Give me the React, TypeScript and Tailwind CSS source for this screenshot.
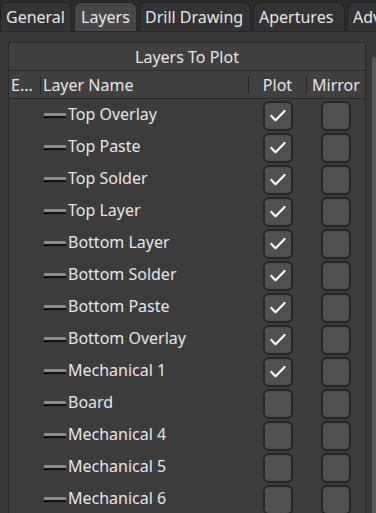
import { Check } from "lucide-react";

const tabs: { label: string; w: string }[] = [
  { label: "General", w: "w-[72px]" },
  { label: "Layers", w: "w-[63px]" },
  { label: "Drill Drawing", w: "w-[112px]" },
  { label: "Apertures", w: "w-[92px]" },
  { label: "Advanced", w: "w-[90px]" },
];

const layers: { name: string; plot: boolean }[] = [
  { name: "Top Overlay", plot: true },
  { name: "Top Paste", plot: true },
  { name: "Top Solder", plot: true },
  { name: "Top Layer", plot: true },
  { name: "Bottom Layer", plot: true },
  { name: "Bottom Solder", plot: true },
  { name: "Bottom Paste", plot: true },
  { name: "Bottom Overlay", plot: true },
  { name: "Mechanical 1", plot: true },
  { name: "Board", plot: false },
  { name: "Mechanical 4", plot: false },
  { name: "Mechanical 5", plot: false },
  { name: "Mechanical 6", plot: false },
];

function Box({ checked }: { checked: boolean }) {
  return (
    <div className="flex h-[30px] w-[30px] items-center justify-center rounded-[6px] border-2 border-[#262626] bg-[#505050]">
      {checked && <Check className="h-[20px] w-[20px] text-white" strokeWidth={2.6} />}
    </div>
  );
}

export default function App() {
  return (
    <div
      className="flex h-[513px] w-[376px] flex-col overflow-hidden bg-[#383838] text-[16px] text-[#e6e6e6]"
      style={{ fontFamily: '"Noto Sans", "Open Sans", sans-serif' }}
    >
      {/* tab strip */}
      <div className="flex h-[32px] shrink-0 items-end gap-[2px] overflow-hidden border-b border-[#262626] bg-[#2b2b2b] pt-[2px]">
        {tabs.map((t) => (
          <div
            key={t.label}
            className={
              t.label === "Layers"
                ? `flex h-full shrink-0 items-center justify-center rounded-t-[7px] border border-b-0 border-[#262626] bg-[#474747] ${t.w}`
                : `flex h-full shrink-0 items-center rounded-t-[7px] border border-b-0 border-[#222] bg-[#333333] pl-[5px] ${t.w}`
            }
          >
            {t.label}
          </div>
        ))}
      </div>

      <div className="flex min-h-0 flex-1 pl-[8px] pt-[10px]">
        {/* table */}
        <div className="flex w-[358px] flex-col border-l border-t border-r border-[#2a2a2a] bg-[#3c3c3c]">
          <div className="flex h-[28px] shrink-0 items-center justify-center border-b border-[#2a2a2a] bg-[#404040]">
            Layers To Plot
          </div>
          <div className="flex h-[28px] shrink-0 items-center border-b border-[#2a2a2a] bg-[#404040]">
            <div className="w-[31px] overflow-hidden whitespace-nowrap pl-[2px]">E...</div>
            <div className="h-[18px] w-px bg-[#262626]" />
            <div className="w-[207px] pl-[2px]">Layer Name</div>
            <div className="h-[18px] w-px bg-[#262626]" />
            <div className="w-[57px] text-center">Plot</div>
            <div className="h-[18px] w-px bg-[#262626]" />
            <div className="w-[58px] text-center">Mirror</div>
          </div>
          {layers.map((l) => (
            <div key={l.name} className="flex h-[32px] shrink-0 items-center">
              <div className="w-[32px]" />
              <div className="flex w-[208px] items-center pb-[3px]">
                <div className="ml-[3px] mr-[2px] mt-[3px] flex w-[22px] flex-col">
                  <div className="h-[3px] bg-[#8c8c8c]" />
                  <div className="h-[2px] bg-[#111]" />
                </div>
                <span>{l.name}</span>
              </div>
              <div className="flex w-[58px] justify-center pt-[2px]">
                <Box checked={l.plot} />
              </div>
              <div className="flex w-[58px] justify-center pt-[2px]">
                <Box checked={false} />
              </div>
            </div>
          ))}
        </div>

        {/* scrollbar */}
        <div className="flex w-[10px] justify-end">
          <div className="mt-[15px] h-full w-[4px] rounded-t-[3px] bg-[#585858]" />
        </div>
      </div>
    </div>
  );
}
